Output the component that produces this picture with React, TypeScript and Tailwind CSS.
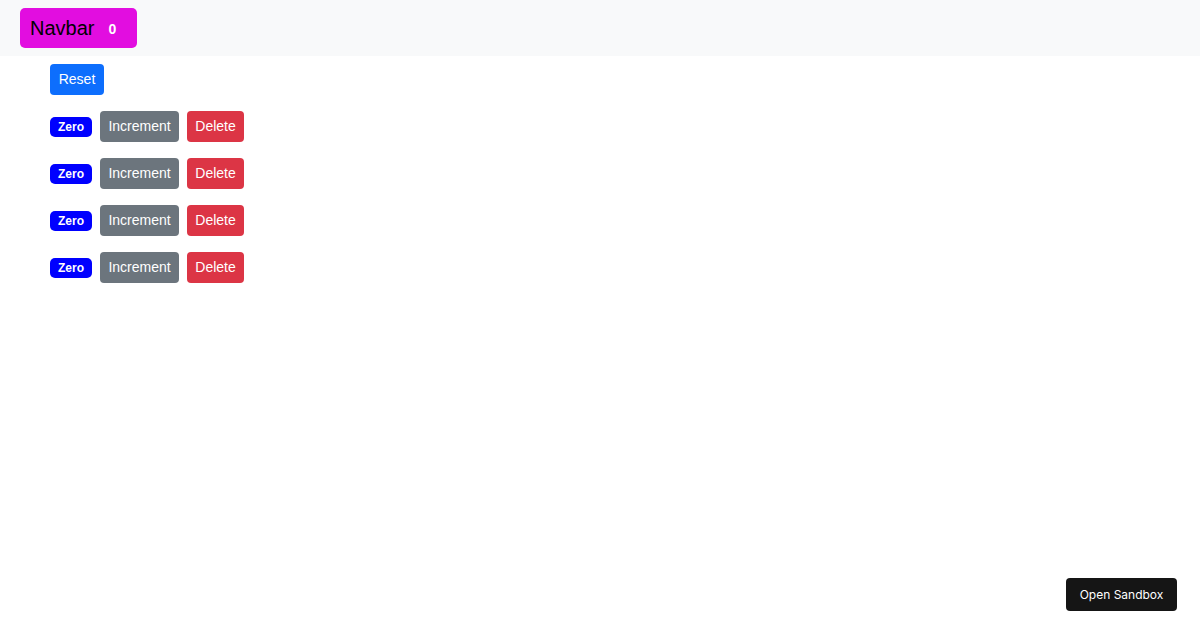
export default function App() {
  const counters = [0, 0, 0, 0];

  return (
    <div className="min-h-[630px] bg-white font-['Liberation_Sans',Arial,sans-serif] relative">
      <nav className="h-14 bg-[#f8f9fa] flex items-center px-5">
        <div className="h-10 w-[117px] bg-[#e20de0] rounded-[5px] flex items-center pl-[10px]">
          <span className="text-[20px] leading-none text-black">Navbar</span>
          <span className="ml-[14px] text-[14px] font-bold text-white leading-none pt-[2px]">0</span>
        </div>
      </nav>

      <main className="pl-[42px]">
        <button className="m-2 h-[31px] w-[54px] pb-[2px] rounded bg-[#0d6efd] text-white text-sm">
          Reset
        </button>
        {counters.map((value, i) => (
          <div key={i} className="flex items-center">
            <span className="m-2 mr-0 h-5 w-[42px] rounded-[5px] bg-[#0000ff] text-white text-xs font-bold flex items-center justify-center">
              {value === 0 ? "Zero" : value}
            </span>
            <button className="m-2 h-[31px] w-[79px] pb-[2px] rounded bg-[#6c757d] text-white text-sm">
              Increment
            </button>
            <button className="m-2 ml-0 h-[31px] w-[57px] pb-[2px] rounded bg-[#dc3545] text-white text-sm">
              Delete
            </button>
          </div>
        ))}
      </main>

      <button className="absolute right-[23px] bottom-[19px] h-[33px] w-[111px] pt-px rounded-[4px] bg-[#151515] text-white text-[12px] font-['Inter',sans-serif]">
        Open Sandbox
      </button>
    </div>
  );
}
